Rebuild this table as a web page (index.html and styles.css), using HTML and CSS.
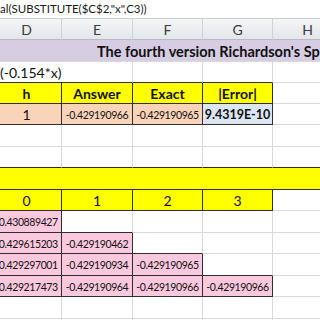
FILE: index.html
```html
<!DOCTYPE html>
<html>
<head>
<meta charset="utf-8">
<link rel="stylesheet" href="styles.css">
</head>
<body>
<div class="formula">al(SUBSTITUTE($C$2,"x",C3))</div>
<div class="sheet">
  <div class="hd hd-d">D</div><div class="hd">E</div><div class="hd">F</div><div class="hd">G</div><div class="hd">H</div>

  <div class="c title span5">The fourth version Richardson's Sp</div>

  <div class="c expr span2 db">(-0.154*x)</div><div class="c db"></div><div class="c db"></div><div class="c"></div>

  <div class="c yel dk b">h</div><div class="c yel dk b">Answer</div><div class="c yel dk b">Exact</div><div class="c yel dk b">|Error|</div><div class="c"></div>

  <div class="c peach dk">1</div><div class="c peach dk num">-0.429190966</div><div class="c peach dk num">-0.429190965</div><div class="c blue dk b num err">9.4319E-10</div><div class="c"></div>

  <div class="c"></div><div class="c"></div><div class="c"></div><div class="c"></div><div class="c"></div>
  <div class="c db"></div><div class="c db"></div><div class="c db"></div><div class="c db"></div><div class="c db"></div>

  <div class="c yel span5 db"></div>

  <div class="c yel dk">0</div><div class="c yel dk">1</div><div class="c yel dk">2</div><div class="c yel dk">3</div><div class="c"></div>

  <div class="c pink dk num">-0.430889427</div><div class="c db"></div><div class="c"></div><div class="c"></div><div class="c"></div>

  <div class="c pink dk num">-0.429615203</div><div class="c pink dk num">-0.429190462</div><div class="c db"></div><div class="c"></div><div class="c"></div>

  <div class="c pink dk num">-0.429297001</div><div class="c pink dk num">-0.429190934</div><div class="c pink dk num">-0.429190965</div><div class="c db"></div><div class="c"></div>

  <div class="c pink dk num">-0.429217473</div><div class="c pink dk num">-0.429190964</div><div class="c pink dk num">-0.429190966</div><div class="c pink dk num">-0.429190966</div><div class="c"></div>

  <div class="c"></div><div class="c"></div><div class="c"></div><div class="c"></div><div class="c"></div>
  <div class="c"></div><div class="c"></div><div class="c"></div><div class="c"></div><div class="c"></div>
</div>
</body>
</html>
```
FILE: styles.css
```css
html, body {
  margin: 0;
  padding: 0;
  background: #ffffff;
  overflow: hidden;
  width: 320px;
  height: 320px;
}

body {
  font-family: Lato, "Liberation Sans", sans-serif;
  color: #111;
}

.formula {
  box-sizing: border-box;
  height: 19px;
  border-bottom: 1px solid #c9ccd0;
  font-size: 11.5px;
  line-height: 18px;
  padding-left: 0;
  white-space: nowrap;
  color: #1a1a1a;
  overflow: hidden;
}

.sheet {
  display: grid;
  margin-left: -8px;
  grid-template-columns: 70px 71px 70px 70px 70px;
  grid-template-rows: 21px 22px 21px 21px 21px 22px 21px 22px 21px 22px 21px 22px 21px 22px 21px;
}

.hd {
  box-sizing: border-box;
  display: flex;
  align-items: center;
  justify-content: center;
  font-size: 14px;
  color: #3b3b3b;
  background: linear-gradient(#f4f5f7, #e3e6ea);
  border-right: 1px solid #cfd2d7;
  border-bottom: 1px solid #b7bbc1;
  padding-top: 1px;
}

.hd-d {
  padding-left: 0;
}

.c {
  box-sizing: border-box;
  display: flex;
  align-items: center;
  justify-content: center;
  font-size: 14px;
  white-space: nowrap;
  overflow: hidden;
  border-right: 1px solid #dadada;
  border-bottom: 1px solid #dadada;
  padding-top: 1px;
}

.span2 { grid-column: span 2; }
.span5 { grid-column: span 5; }

.title {
  background: #d6cde3;
  justify-content: flex-start;
  padding-left: 105px;
  font-weight: 700;
  font-size: 14.5px;
  border-right: none;
}

.expr {
  justify-content: flex-start;
  padding-left: 8px;
  font-size: 14px;
}

.db { border-bottom-color: #2f2f2f; }

.dk {
  border-right-color: #2f2f2f;
  border-bottom-color: #2f2f2f;
}

.b { font-weight: 700; }

.yel { background: #ffff00; }
.peach { background: #fad4b8; }
.blue { background: #dce6f2; }
.pink { background: #fbc8de; }

.num {
  font-size: 10.5px;
  letter-spacing: -0.4px;
}

.err {
  font-size: 12.5px;
  letter-spacing: 0;
}
```
